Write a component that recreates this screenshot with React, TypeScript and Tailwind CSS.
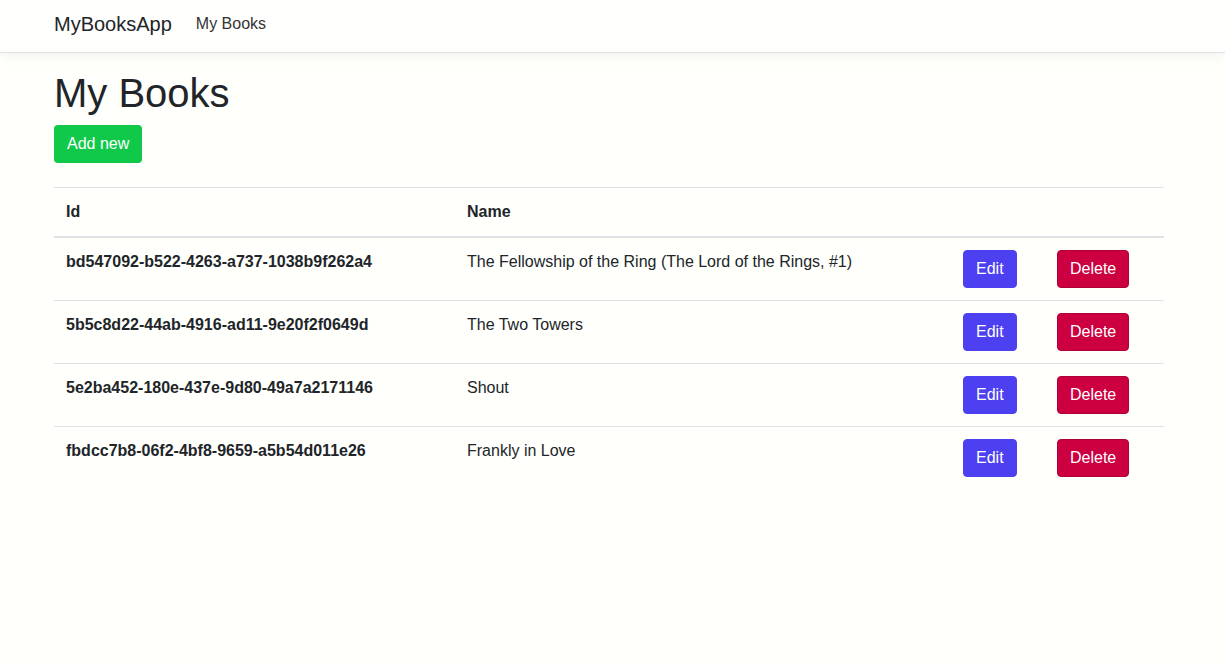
import React from "react";

const books = [
  { id: "bd547092-b522-4263-a737-1038b9f262a4", name: "The Fellowship of the Ring (The Lord of the Rings, #1)" },
  { id: "5b5c8d22-44ab-4916-ad11-9e20f2f0649d", name: "The Two Towers" },
  { id: "5e2ba452-180e-437e-9d80-49a7a2171146", name: "Shout" },
  { id: "fbdcc7b8-06f2-4bf8-9659-a5b54d011e26", name: "Frankly in Love" },
];

export default function App() {
  return (
    <div
      className="min-h-[664px] bg-[#fffffc] text-[#212529] text-[16px] leading-[24px]"
      style={{ fontFamily: '"Liberation Sans", Arial, sans-serif' }}
    >
      <nav className="h-[53px] bg-[#fffffd] border-b border-[#dee2e6] shadow-[0_4px_12px_rgba(0,0,0,0.05)]">
        <div className="ml-[54px] w-[1110px] h-[48px] flex items-center">
          <span className="text-[20px] leading-[30px] text-[#212529] mr-[24px]">MyBooksApp</span>
          <span className="text-[16px] text-[#333333]">My Books</span>
        </div>
      </nav>
      <main className="ml-[54px] w-[1110px]">
        <h1 className="text-[40px] leading-[48px] mt-[16px] mb-[8px] font-normal">My Books</h1>
        <button className="h-[38px] px-[13px] bg-[#10c94b] text-white rounded-[4px] text-[16px] leading-[24px]">
          Add new
        </button>
        <table className="w-full mt-[24px] border-collapse">
          <thead>
            <tr>
              <th className="text-left font-bold px-[12px] py-[12px] border-t border-[#dee2e6] border-b-2 border-b-[#dee2e6] w-[401px]">Id</th>
              <th className="text-left font-bold px-[12px] py-[12px] border-t border-[#dee2e6] border-b-2 border-b-[#dee2e6] w-[496px]">Name</th>
              <th className="border-t border-[#dee2e6] border-b-2 border-b-[#dee2e6] w-[94px]"></th>
              <th className="border-t border-[#dee2e6] border-b-2 border-b-[#dee2e6]"></th>
            </tr>
          </thead>
          <tbody>
            {books.map((b, i) => (
              <tr key={b.id} className={i > 0 ? "border-t border-[#dee2e6]" : ""}>
                <td className="align-top px-[12px] py-[12px] font-bold">{b.id}</td>
                <td className="align-top px-[12px] py-[12px]">{b.name}</td>
                <td className="align-top px-[12px] py-[12px]">
                  <button className="h-[38px] px-[12px] bg-[#4c40f0] text-white rounded-[4px] border border-[#4c40f0]">Edit</button>
                </td>
                <td className="align-top px-[12px] py-[12px]">
                  <button className="h-[38px] px-[12px] bg-[#cc0040] text-white rounded-[4px] border border-[#b0003a]">Delete</button>
                </td>
              </tr>
            ))}
          </tbody>
        </table>
      </main>
    </div>
  );
}
